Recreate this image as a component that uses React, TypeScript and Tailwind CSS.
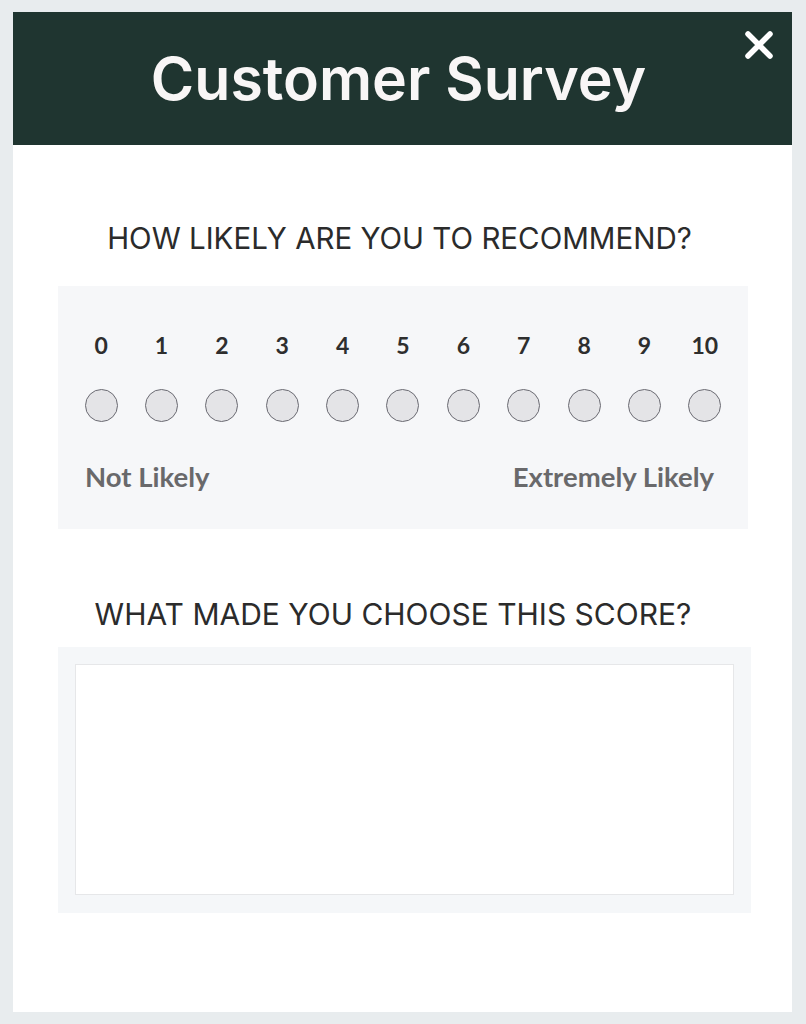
import { useState } from 'react';

const SCORES = [0, 1, 2, 3, 4, 5, 6, 7, 8, 9, 10];

function CloseIcon() {
  return (
    <svg width="30" height="30" viewBox="0 0 30 30" fill="none" aria-hidden="true">
      <path d="M4 4 L26 26 M26 4 L4 26" stroke="#ffffff" strokeWidth="5.5" strokeLinecap="round" />
    </svg>
  );
}

export default function App() {
  const [score, setScore] = useState<number | null>(null);

  return (
    <div className="min-h-[1024px] w-[806px] bg-[#e8ecee] pt-[12px] pl-[13px]">
      <div className="flex h-[1000px] w-[779px] flex-col bg-white">
        {/* Header */}
        <div className="relative flex h-[133px] items-center justify-center bg-[#1f3530] pr-[8px]">
          <h1
            className="text-[59px] font-semibold leading-none text-[#f8f6f6]"
            style={{ fontFamily: 'Inter, "Noto Sans", sans-serif' }}
          >
            Customer Survey
          </h1>
          <button className="absolute right-[18px] top-[18px]" aria-label="Close">
            <CloseIcon />
          </button>
        </div>

        <div className="flex flex-col items-start" style={{ fontFamily: 'Inter, "Noto Sans", sans-serif' }}>
          <h2 className="mt-[79px] h-[29px] w-full pr-[6px] text-center text-[29.5px] font-normal leading-[29px] text-[#2b2b2b]">
            HOW LIKELY ARE YOU TO RECOMMEND?
          </h2>

          {/* Score scale */}
          <div
            className="ml-[45px] mt-[33px] h-[243px] w-[690px] bg-[#f6f7f9] pt-[48px]"
            style={{ fontFamily: 'Lato, "Open Sans", sans-serif' }}
          >
            <div className="grid grid-cols-11 px-[13px]">
              {SCORES.map((n) => (
                <div key={n} className="flex flex-col items-center">
                  <span className="h-[23px] text-[23px] font-bold leading-[23px] text-[#2e2e2e]">{n}</span>
                  <button
                    onClick={() => setScore(n)}
                    aria-label={`Score ${n}`}
                    className={`mt-[32px] h-[33px] w-[33px] rounded-full border-[1.5px] border-[#6a6a72] ${
                      score === n ? 'bg-[#1f3530]' : 'bg-[#e4e4e7]'
                    }`}
                  />
                </div>
              ))}
            </div>
            <div className="mt-[41px] flex justify-between pl-[27px] pr-[34px] text-[27.5px] font-bold leading-[28px] text-[#69696b]">
              <span>Not Likely</span>
              <span>Extremely Likely</span>
            </div>
          </div>

          <h2 className="mt-[70px] h-[30px] w-full pr-[19px] text-center text-[30px] font-normal leading-[30px] text-[#2b2b2b]">
            WHAT MADE YOU CHOOSE THIS SCORE?
          </h2>

          {/* Comment box */}
          <div className="ml-[45px] mt-[18px] h-[266px] w-[693px] bg-[#f5f7f9] p-[17px] pt-[17px]">
            <textarea className="block h-[231px] w-full resize-none border border-[#e6e7e9] bg-white outline-none" />
          </div>
        </div>
      </div>
    </div>
  );
}
